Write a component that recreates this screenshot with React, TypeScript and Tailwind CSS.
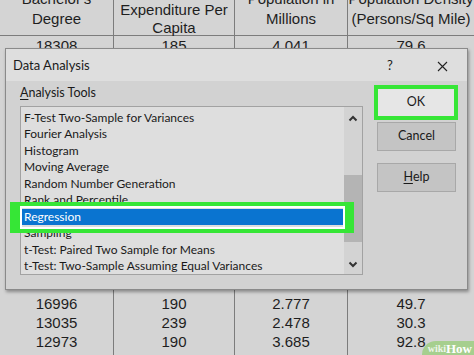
import React from 'react';

// columns of the sheet behind the dialog
const cols = ['w-[114px]', 'w-[121px]', 'w-[113px]', 'w-[126px]'];

const topRows = [['18308', '185', '4.041', '79.6']];
const bottomRows = [
  ['20999', '179', '3.047', '73.9'],
  ['16996', '190', '2.777', '49.7'],
  ['13035', '239', '2.478', '30.3'],
  ['12973', '190', '3.685', '92.8'],
  ['14414', '211', '4.143', '41.1'],
];

const tools = [
  'F-Test Two-Sample for Variances',
  'Fourier Analysis',
  'Histogram',
  'Moving Average',
  'Random Number Generation',
  'Rank and Percentile',
  'Regression',
  'Sampling',
  't-Test: Paired Two Sample for Means',
  't-Test: Two-Sample Assuming Equal Variances',
];

const SheetRow = ({ cells }: { cells: string[] }) => (
  <div className="flex h-[19px] leading-[19px]">
    {cells.map((c, i) => (
      <div key={i} className={`${cols[i]} text-center ${i < 3 ? 'border-r border-[#7c7c7c]' : ''}`}>
        {c}
      </div>
    ))}
  </div>
);

const Chevron = ({ up }: { up?: boolean }) => (
  <svg width="10" height="7" viewBox="0 0 10 7">
    <polyline
      points={up ? '1.5,5.5 5,2 8.5,5.5' : '1.5,1.5 5,5 8.5,1.5'}
      fill="none"
      stroke="#333"
      strokeWidth="2"
    />
  </svg>
);

export default function App() {
  return (
    <div className="relative w-[474px] h-[355px] overflow-hidden bg-[#d4d4d4] text-[#1e1e1e] font-['Liberation_Sans',Arial,sans-serif] text-[15px]">
      {/* spreadsheet */}
      <div className="mt-[-12px]">
        <div className="flex h-[48px] border-b border-[#7c7c7c]">
          <div className="w-[114px] border-r border-[#7c7c7c] text-center leading-[20px] pt-[1px]">
            Bachelor's
            <br />
            Degree
          </div>
          <div className="w-[121px] border-r border-[#7c7c7c] text-center leading-[18px] pt-[13px]">
            Expenditure Per
            <br />
            Capita
          </div>
          <div className="w-[113px] border-r border-[#7c7c7c] text-center leading-[20px] pt-[1px]">
            Population in
            <br />
            Millions
          </div>
          <div className="w-[126px] text-center leading-[20px] pt-[1px] whitespace-nowrap">
            Population Density
            <br />
            (Persons/Sq Mile)
          </div>
        </div>
        {topRows.map((r, i) => (
          <SheetRow key={i} cells={r} />
        ))}
        <div className="flex h-[219.5px]">
          {cols.map((c, i) => (
            <div key={i} className={`${c} ${i < 3 ? 'border-r border-[#7c7c7c]' : ''}`} />
          ))}
        </div>
        {bottomRows.map((r, i) => (
          <SheetRow key={i} cells={r} />
        ))}
      </div>

      {/* Data Analysis dialog */}
      <div className="absolute left-[5px] top-[48px] w-[463px] h-[242px] flex flex-col border border-[#8a8a8a] bg-[#d2d2d2] shadow-[1px_2px_3px_rgba(0,0,0,0.35)] font-['Lato','Open_Sans',sans-serif] text-[12px] text-[#1a1a1a]">
        <div className="flex items-center h-[32px] pt-[2px] bg-[#dedede] pl-[7px] pr-[13px]">
          <span className="text-[13px]">Data Analysis</span>
          <span className="ml-auto w-[24px] text-center text-[13px]">?</span>
          <span className="ml-[28px] w-[24px] flex justify-center">
            <svg width="11" height="11" viewBox="0 0 11 11">
              <path d="M1 1L10 10M10 1L1 10" stroke="#222" strokeWidth="1.1" />
            </svg>
          </span>
        </div>

        <div className="flex flex-1 pl-[14px]">
          <div className="w-[343px] flex flex-col">
            <div className="pt-[4px] h-[25px] leading-[16px] text-[12.5px]">
              <span className="underline underline-offset-2">A</span>nalysis Tools
            </div>
            <div className="flex h-[169px] border border-[#a2a2a2] bg-[#dedede]">
              <div className="flex-1 pt-[2.75px] leading-[16.5px]">
                {tools.map((t) => (
                  <div
                    key={t}
                    className={`h-[16.5px] pl-[3px] whitespace-nowrap ${t === 'Regression' ? 'bg-[#0a74d0] text-white' : ''}`}
                  >
                    {t}
                  </div>
                ))}
              </div>
              <div className="w-[18px] flex flex-col items-center bg-[#d3d3d3]">
                <div className="h-[22px] flex items-center justify-center">
                  <Chevron up />
                </div>
                <div className="mt-[46px] w-full h-[67px] bg-[#b4b4b4]" />
                <div className="flex-1" />
                <div className="h-[20px] flex items-center justify-center">
                  <Chevron />
                </div>
              </div>
            </div>
          </div>

          <div className="ml-[14px] w-[79px] flex flex-col text-[12.5px]">
            <button className="mt-[8px] ml-[1px] w-[76px] h-[27px] bg-[#e6e6e6] ring-4 ring-[#36e636]">OK</button>
            <button className="mt-[6px] w-[79px] h-[29px] bg-[#c4c4c4] border border-[#a8a8a8]">Cancel</button>
            <button className="mt-[12px] w-[79px] h-[29px] bg-[#c4c4c4] border border-[#a8a8a8]">
              <span className="underline underline-offset-2">H</span>elp
            </button>
          </div>
        </div>

        {/* highlight around the chosen tool */}
        <div className="absolute left-[4px] top-[153px] w-[344px] h-[31px] border-y-4 border-l-[10px] border-r-[9px] border-[#36e636] shadow-[inset_0_0_0_2px_#fff]" />
      </div>

      {/* wikiHow tab */}
      <div className="absolute right-0 bottom-0 w-[52px] h-[14px] rounded-tl-[14px] bg-[#a6cf8e] flex items-end justify-end pr-[2px] font-['Liberation_Serif',serif] font-bold leading-[13px]">
        <span className="text-[10px] text-[#eef5ea]">wiki</span>
        <span className="text-[13px] text-white">How</span>
      </div>
    </div>
  );
}
